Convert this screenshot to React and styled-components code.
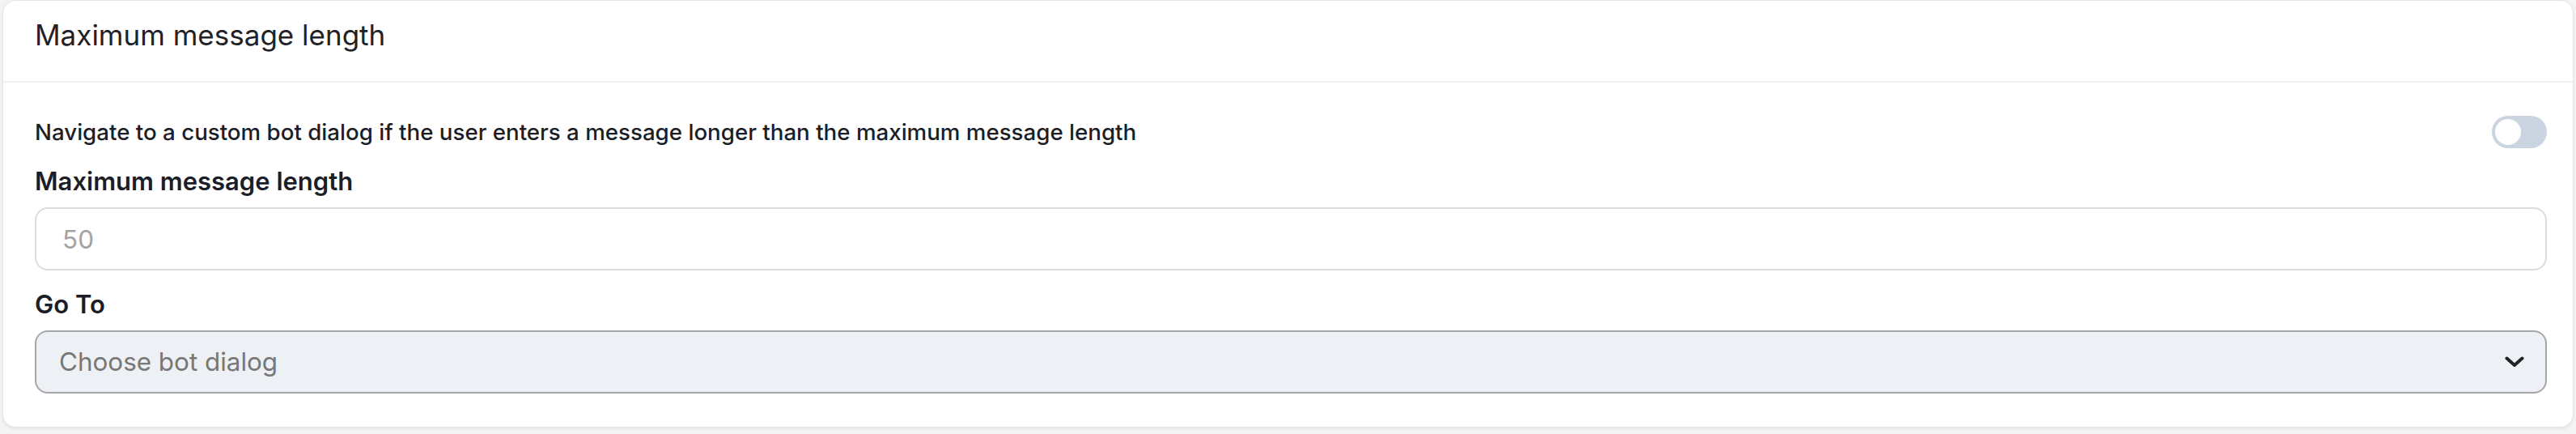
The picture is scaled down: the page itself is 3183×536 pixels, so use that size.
import React from "react";
import styled, { createGlobalStyle } from "styled-components";

const Global = createGlobalStyle`
  html, body { margin: 0; padding: 0; background: #f4f4f5; }
  body { font-family: Inter, "Noto Sans", sans-serif; color: #1b1e26; }
  * { box-sizing: border-box; }
`;

const Card = styled.section`
  margin: 0 3px 8px 3px;
  background: #ffffff;
  border: 1px solid #e4e4e7;
  border-radius: 16px;
  box-shadow: 0 2px 4px rgba(0, 0, 0, 0.06);
  overflow: hidden;
`;

const Header = styled.header`
  padding: 21px 40px 35px 39px;
  border-bottom: 2px solid #eef0f4;
`;

const Title = styled.h2`
  margin: 0;
  font-size: 35px;
  line-height: 43px;
  font-weight: 400;
  color: #1f2227;
`;

const Body = styled.div`
  display: flex;
  flex-direction: column;
  padding: 41px 32px 41px 39px;
`;

const ToggleRow = styled.div`
  display: flex;
  align-items: center;
  justify-content: space-between;
  height: 40px;
  margin-bottom: 21px;
`;

const RowText = styled.span`
  font-size: 27.7px;
  font-weight: 500;
  color: #1b1e26;
`;

const Switch = styled.button`
  position: relative;
  width: 68px;
  height: 40px;
  border: none;
  padding: 0;
  border-radius: 20px;
  background: #cbd5e1;
  cursor: pointer;
  &::after {
    content: "";
    position: absolute;
    left: 4px;
    top: 4px;
    width: 32px;
    height: 32px;
    border-radius: 50%;
    background: #ffffff;
  }
`;

const Field = styled.div`
  display: flex;
  flex-direction: column;
  gap: 12px;
  margin-top: ${(p) => (p.$first ? "0" : "22px")};
`;

const Label = styled.label`
  font-size: 31px;
  line-height: 40px;
  font-weight: 600;
  color: #1b1e26;
`;

const Input = styled.input`
  height: 78px;
  width: 100%;
  border: 2px solid #dcdcde;
  border-radius: 16px;
  padding: 0 32px;
  font-family: inherit;
  font-size: 31.5px;
  color: #1b1e26;
  background: #fff;
  outline: none;
  &::placeholder { color: #a3a3a3; }
`;

const SelectBox = styled.div`
  display: flex;
  align-items: center;
  justify-content: space-between;
  height: 78px;
  padding: 0 26px 0 28px;
  border: 2px solid #a6a6a6;
  border-radius: 16px;
  background: #edf0f5;
  cursor: pointer;
`;

const Placeholder = styled.span`
  font-size: 31.4px;
  color: #777777;
`;

const Chevron = () => (
  <svg width="24" height="16" viewBox="0 0 24 16" fill="none">
    <path d="M2.5 3.5 L12 12 L21.5 3.5" stroke="#222" strokeWidth="4" strokeLinecap="round" strokeLinejoin="round" />
  </svg>
);

export default function App() {
  return (
    <>
      <Global />
      <Card>
        <Header>
          <Title>Maximum message length</Title>
        </Header>
        <Body>
          <ToggleRow>
            <RowText>
              Navigate to a custom bot dialog if the user enters a message longer than the maximum message length
            </RowText>
            <Switch aria-label="toggle" />
          </ToggleRow>
          <Field $first>
            <Label>Maximum message length</Label>
            <Input placeholder="50" />
          </Field>
          <Field>
            <Label>Go To</Label>
            <SelectBox>
              <Placeholder>Choose bot dialog</Placeholder>
              <Chevron />
            </SelectBox>
          </Field>
        </Body>
      </Card>
    </>
  );
}
